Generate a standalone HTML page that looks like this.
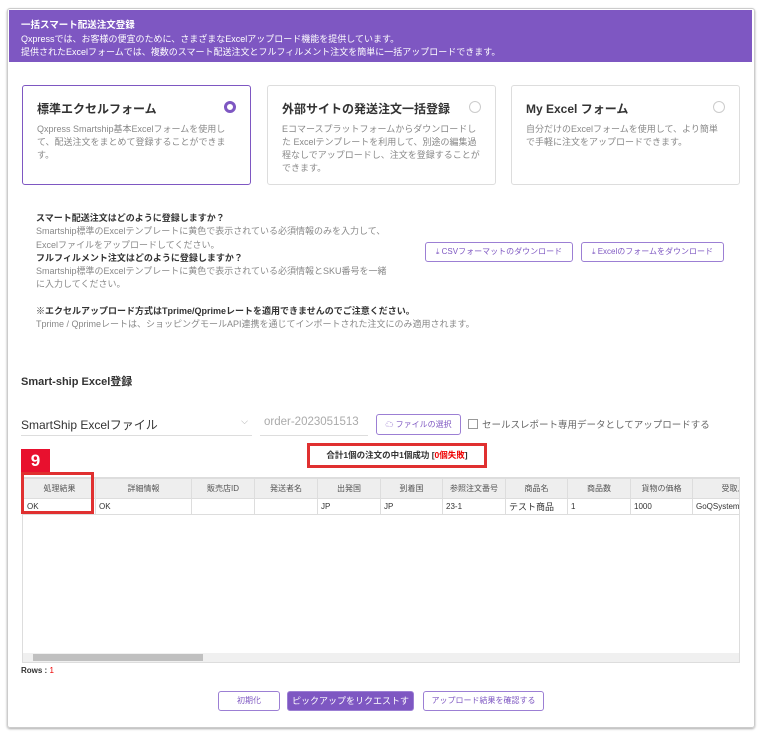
<!DOCTYPE html><html><head><meta charset="utf-8"><style>
*{box-sizing:border-box;margin:0;padding:0}
body{width:760px;height:736px;background:#fff;font-family:"Liberation Sans","Noto Sans CJK JP",sans-serif;position:relative;overflow:hidden;color:#333}
.a{position:absolute}
.frame{left:7px;top:8px;width:748px;height:720px;border:1px solid #ccc;border-radius:3px;box-shadow:0 1px 2px #aaa}
.hdr{left:9px;top:10px;width:743px;height:52px;background:#7E57C2;color:#fff;font-size:9px;line-height:13.5px;padding:9px 12px 0}
.card{border:1px solid #ddd;border-radius:3px;height:100px;top:85px;width:229px;padding:14px 14px}
.card h3{font-size:12px;font-weight:bold;color:#333;margin-bottom:6px}
.card p{font-size:9px;line-height:13px;color:#888}
.rad{position:absolute;right:14px;top:15px;width:12px;height:12px;border-radius:50%;border:1px solid #ccc}
.t{font-size:9px;line-height:13.3px;color:#888;white-space:nowrap}
.t b{color:#333}
.btn{border:1px solid #9c7fd4;border-radius:3px;font-size:8px;color:#7E57C2;text-align:center;background:#fff}
table{border-collapse:collapse;font-size:8px}
td,th{border:1px solid #ddd;height:16px;padding:0 3px;white-space:nowrap}
th{background:#eee;font-weight:normal;color:#555;height:20px}
</style></head><body>
<div class="a frame"></div>
<div class="a hdr"><b style="font-size:9.5px">一括スマート配送注文登録</b><br>Qxpressでは、お客様の便宜のために、さまざまなExcelアップロード機能を提供しています。<br>提供されたExcelフォームでは、複数のスマート配送注文とフルフィルメント注文を簡単に一括アップロードできます。</div>
<div class="a card" style="left:22px;border-color:#7E57C2"><h3>標準エクセルフォーム</h3><p>Qxpress Smartship基本Excelフォームを使用して、配送注文をまとめて登録することができます。</p><div class="rad" style="border:3px solid #7E57C2"></div></div>
<div class="a card" style="left:267px"><h3>外部サイトの発送注文一括登録</h3><p>Eコマースプラットフォームからダウンロードした Excelテンプレートを利用して、別途の編集過程なしでアップロードし、注文を登録することができます。</p><div class="rad"></div></div>
<div class="a card" style="left:511px"><h3>My Excel フォーム</h3><p>自分だけのExcelフォームを使用して、より簡単で手軽に注文をアップロードできます。</p><div class="rad"></div></div>
<div class="a t" style="left:36px;top:212px"><b>スマート配送注文はどのように登録しますか？</b><br>Smartship標準のExcelテンプレートに黄色で表示されている必須情報のみを入力して、<br>Excelファイルをアップロードしてください。<br><b>フルフィルメント注文はどのように登録しますか？</b><br>Smartship標準のExcelテンプレートに黄色で表示されている必須情報とSKU番号を一緒<br>に入力してください。<br><br><b>※エクセルアップロード方式はTprime/Qprimeレートを適用できませんのでご注意ください。</b><br>Tprime / Qprimeレートは、ショッピングモールAPI連携を通じてインポートされた注文にのみ適用されます。</div>
<div class="a btn" style="left:425px;top:242px;width:148px;height:20px;line-height:18px">⤓ CSVフォーマットのダウンロード</div>
<div class="a btn" style="left:581px;top:242px;width:143px;height:20px;line-height:18px">⤓ Excelのフォームをダウンロード</div>
<div class="a" style="left:21px;top:373px;font-size:11px;font-weight:bold;color:#333">Smart-ship Excel登録</div>
<div class="a" style="left:21px;top:416px;width:231px;height:20px;border-bottom:1px solid #ddd;font-size:12px;color:#333">SmartShip Excelファイル<span style="position:absolute;right:4px;color:#aaa;font-size:9px">⌵</span></div>
<div class="a" style="left:260px;top:416px;width:108px;height:20px;border-bottom:1px solid #ddd;font-size:11.5px;color:#aaa;padding-left:4px">order-2023051513</div>
<div class="a btn" style="left:376px;top:414px;width:85px;height:21px;line-height:19px">☁ ファイルの選択</div>
<div class="a" style="left:468px;top:417px;font-size:9.5px;color:#666"><span style="display:inline-block;width:10px;height:10px;border:1px solid #999;vertical-align:-1px;margin-right:4px"></span>セールスレポート専用データとしてアップロードする</div>
<div class="a" style="left:307px;top:443px;width:180px;height:25px;border:3px solid #e03030;font-size:8.5px;font-weight:bold;text-align:center;line-height:19px;color:#333">合計1個の注文の中1個成功 [<span style="color:#e00">0個失敗</span>]</div>
<div class="a" style="left:21px;top:449px;width:29px;height:24px;background:#e8102e;color:#fff;font-weight:bold;font-size:17px;text-align:center;line-height:24px">9</div>
<div class="a" style="left:22px;top:477px;width:718px;height:186px;border:1px solid #ddd;overflow:hidden">
<table style="width:760px"><tr><th style="width:72px">処理結果</th><th style="width:96px">詳細情報</th><th style="width:63px">販売店ID</th><th style="width:63px">発送者名</th><th style="width:63px">出発国</th><th style="width:62px">到着国</th><th style="width:63px">参照注文番号</th><th style="width:62px">商品名</th><th style="width:63px">商品数</th><th style="width:62px">貨物の価格</th><th>受取人名</th></tr>
<tr><td>OK</td><td>OK</td><td></td><td></td><td>JP</td><td>JP</td><td>23-1</td><td style="font-size:9px">テスト商品</td><td>1</td><td>1000</td><td>GoQSystem</td></tr></table>
<div class="a" style="left:0;bottom:0;width:718px;height:9px;background:#f0f0f0"></div>
<div class="a" style="left:10px;bottom:1px;width:170px;height:7px;background:#c0c0c0"></div>
</div>
<div class="a" style="left:21px;top:472px;width:73px;height:42px;border:3px solid #e03030"></div>
<div class="a" style="left:21px;top:666px;font-size:8px;font-weight:bold;color:#333">Rows : <span style="color:#e00;font-weight:normal">1</span></div>
<div class="a btn" style="left:218px;top:691px;width:62px;height:20px;line-height:18px">初期化</div>
<div class="a btn" style="left:287px;top:691px;width:127px;height:20px;line-height:18px;background:#7E57C2;color:#fff;font-size:9px">ピックアップをリクエストする</div>
<div class="a btn" style="left:423px;top:691px;width:121px;height:20px;line-height:18px">アップロード結果を確認する</div>
</body></html>
